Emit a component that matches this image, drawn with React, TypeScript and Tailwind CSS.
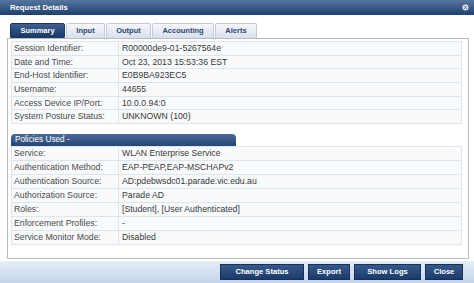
const summaryRows: [string, string][] = [
  ['Session Identifier:', 'R00000de9-01-5267564e'],
  ['Date and Time:', 'Oct 23, 2013 15:53:36 EST'],
  ['End-Host Identifier:', 'E0B9BA923EC5'],
  ['Username:', '44655'],
  ['Access Device IP/Port:', '10.0.0.94:0'],
  ['System Posture Status:', 'UNKNOWN (100)'],
];

const policyRows: [string, string][] = [
  ['Service:', 'WLAN Enterprise Service'],
  ['Authentication Method:', 'EAP-PEAP,EAP-MSCHAPv2'],
  ['Authentication Source:', 'AD:pdebwsdc01.parade.vic.edu.au'],
  ['Authorization Source:', 'Parade AD'],
  ['Roles:', '[Student], [User Authenticated]'],
  ['Enforcement Profiles:', '-'],
  ['Service Monitor Mode:', 'Disabled'],
];

const tabs = [
  { label: 'Summary', w: 'w-[55px]', active: true },
  { label: 'Input', w: 'w-[39px]', active: false },
  { label: 'Output', w: 'w-[45px]', active: false },
  { label: 'Accounting', w: 'w-[62px]', active: false },
  { label: 'Alerts', w: 'w-[42px]', active: false },
];

function InfoTable({ rows, rowH }: { rows: [string, string][]; rowH: string }) {
  return (
    <div className="w-[451px] border border-[#dfe4ea] border-b-0 bg-[#f8fafc]">
      {rows.map(([k, v]) => (
        <div key={k} className={`flex ${rowH} border-b border-[#dfe4ea]`}>
          <div className="w-[107px] shrink-0 border-r border-[#dfe4ea] pl-[2px] flex items-center text-[#4a4a4a]">{k}</div>
          <div className="pl-[3px] flex items-center text-[#383838]">{v}</div>
        </div>
      ))}
    </div>
  );
}

export default function App() {
  return (
    <div className="w-[474px] h-[283px] bg-white flex flex-col overflow-hidden text-[8.7px] leading-none" style={{ fontFamily: '"Liberation Sans", Arial, sans-serif' }}>
      <div className="h-[15px] shrink-0 flex items-center justify-between pl-[10px] pr-[5px] bg-gradient-to-b from-[#56779f] to-[#1f3f6d]">
        <span className="text-white font-bold text-[7.7px]">Request Details</span>
        <svg width="7" height="7" viewBox="0 0 7 7">
          <circle cx="3.5" cy="3.5" r="3" fill="#dfe6ef" />
          <path d="M2.2 2.2 L4.8 4.8 M4.8 2.2 L2.2 4.8" stroke="#3b577f" strokeWidth="0.9" />
        </svg>
      </div>

      <div className="flex gap-[1px] ml-[10px] mt-[8px] h-[15px] shrink-0">
        {tabs.map((t) => (
          <div
            key={t.label}
            className={`${t.w} h-full flex items-center justify-center rounded-t-[2px] font-bold text-[7.5px] border ${
              t.active
                ? 'bg-gradient-to-b from-[#3e6192] to-[#1b3966] text-white border-[#1b3966]'
                : 'bg-gradient-to-b from-[#f5f8fb] to-[#d6e1ed] text-[#2d4670] border-[#c3cbd5] border-b-0'
            }`}
          >
            {t.label}
          </div>
        ))}
      </div>

      <div className="ml-[7px] w-[462px] h-[221px] shrink-0 border border-[#b9bdc3] pl-[3px] pt-[2px]">
        <InfoTable rows={summaryRows} rowH="h-[13.67px]" />
        <div className="mt-[10px] w-[225px] h-[12px] rounded-t-[4px] bg-gradient-to-b from-[#4a6b98] to-[#264676] text-white flex items-center pl-[4px] text-[8.2px]">
          Policies Used -
        </div>
        <InfoTable rows={policyRows} rowH="h-[14px]" />
      </div>

      <div className="mt-[2px] flex-1 bg-gradient-to-b from-[#e6edf6] to-[#c4d5e9] flex justify-end items-start pt-[3px] pr-[11px] gap-[4px]">
        {[
          ['Change Status', 'w-[84px]'],
          ['Export', 'w-[42px]'],
          ['Show Logs', 'w-[67px]'],
          ['Close', 'w-[38px]'],
        ].map(([label, w]) => (
          <button
            key={label}
            className={`${w} h-[16px] flex items-center justify-center bg-gradient-to-b from-[#35598c] to-[#1c3b69] border border-[#17325a] text-white font-bold text-[7.6px]`}
          >
            {label}
          </button>
        ))}
      </div>
    </div>
  );
}
